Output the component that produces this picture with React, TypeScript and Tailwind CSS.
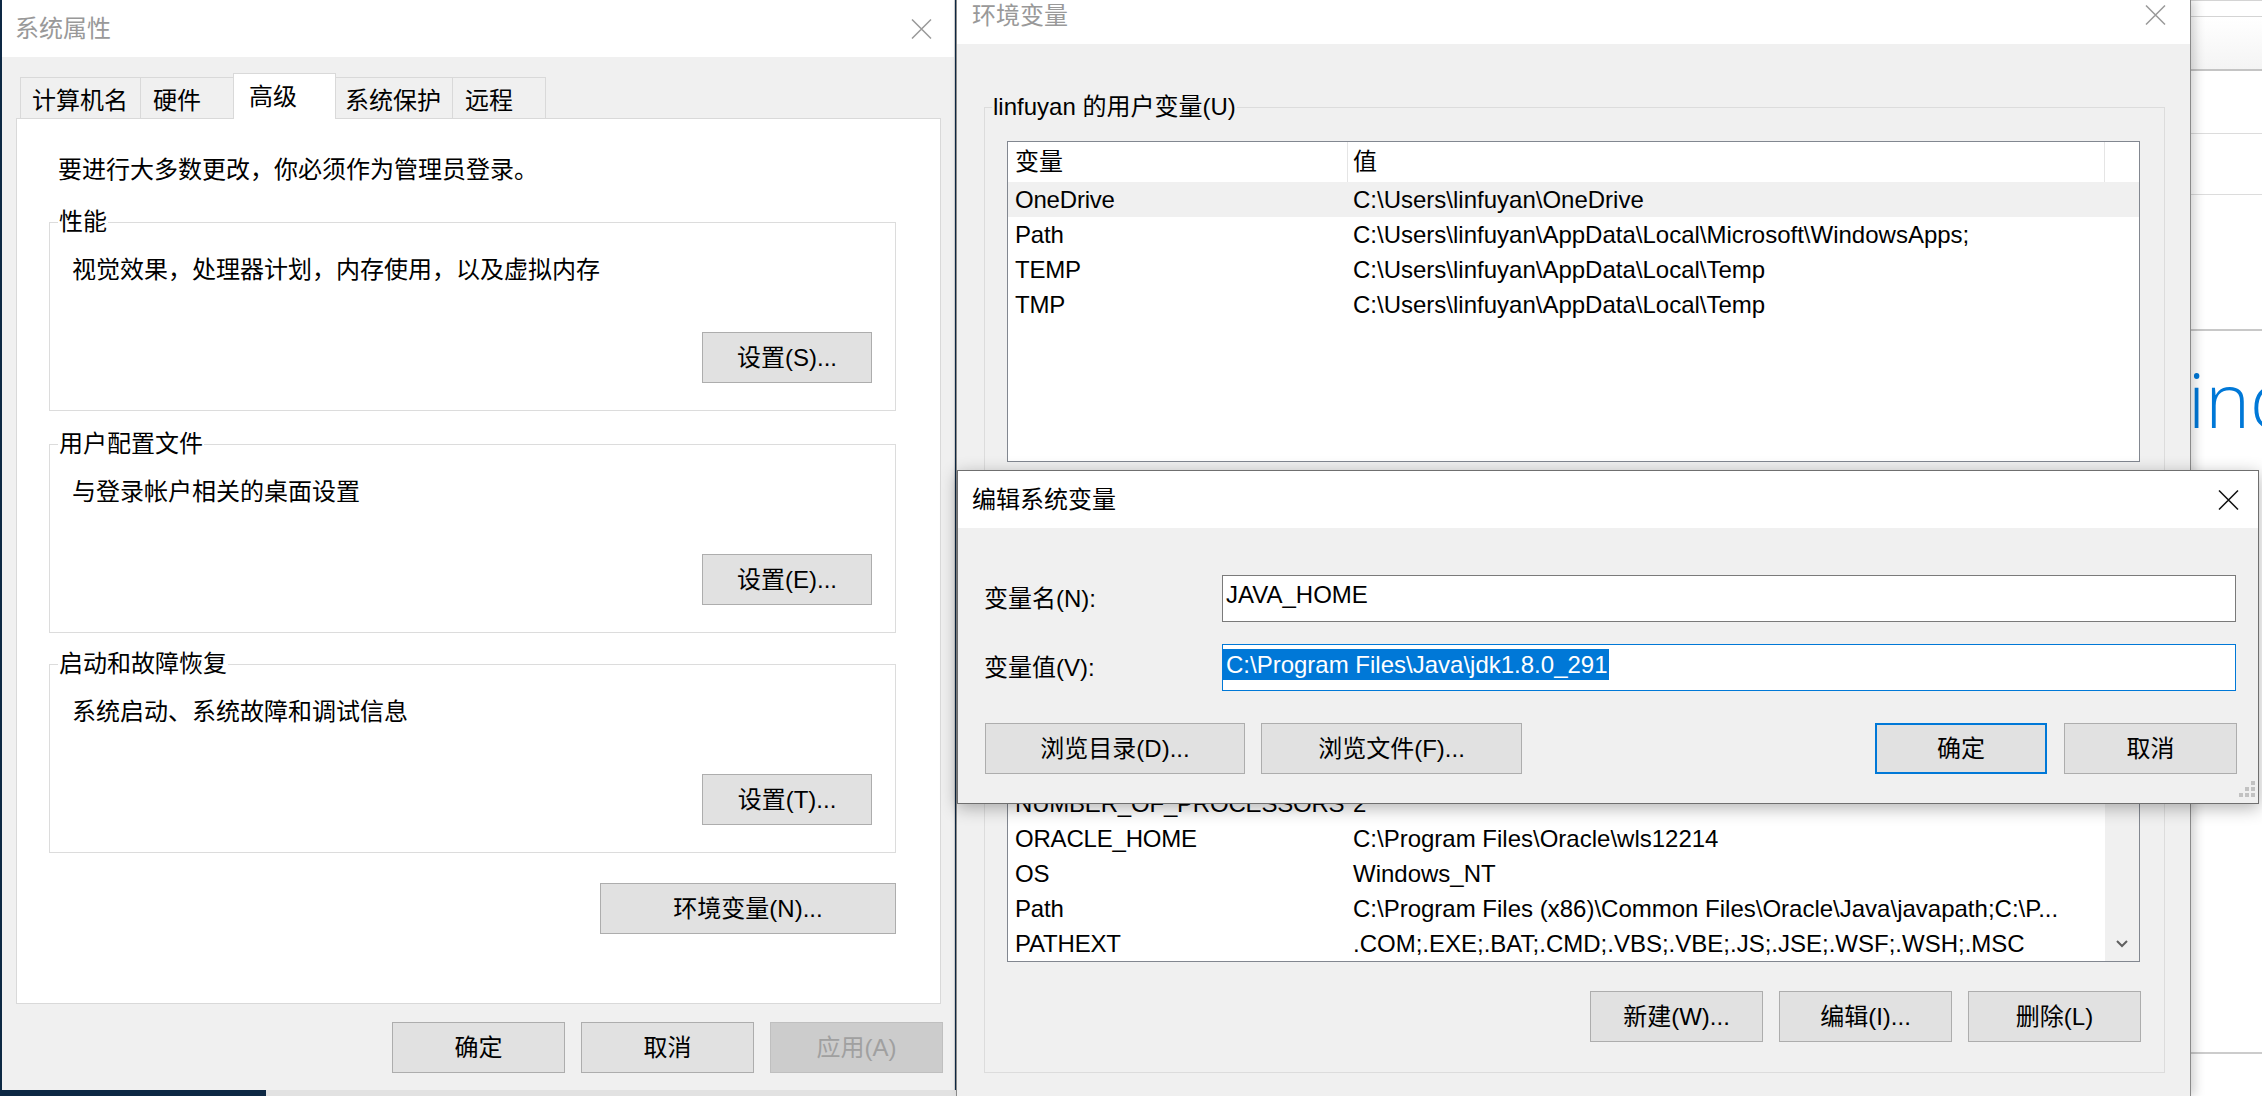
import React from 'react'

function CloseX({ color }: { color: string }) {
  return (
    <svg width="21" height="20" viewBox="0 0 21 20">
      <path d="M1 0.5 L20 19.5 M20 0.5 L1 19.5" stroke={color} strokeWidth="1.5" fill="none" />
    </svg>
  )
}

function Btn({ label, className = '', disabled = false, primary = false }: { label: string; className?: string; disabled?: boolean; primary?: boolean }) {
  const look = disabled
    ? 'bg-[#cccccc] border border-[#bfbfbf] text-[#a0a0a0]'
    : primary
      ? 'bg-[#e1e1e1] border-2 border-[#0078d7] text-black'
      : 'bg-[#e1e1e1] border border-[#adadad] text-black'
  return (
    <div className={`h-[51px] flex items-center justify-center leading-none ${look} ${className}`}>
      {label}
    </div>
  )
}

function GroupBox({ title, desc, btn, className = '' }: { title: string; desc: string; btn: string; className?: string }) {
  return (
    <fieldset className={`min-w-0 w-[847px] h-[203px] border border-[#dcdcdc] ${className}`}>
      <legend className="ml-[8px] px-[1px] leading-[28px]">{title}</legend>
      <div className="pl-[22px] pt-[19px] leading-[30px]">{desc}</div>
      <div className="flex justify-end pr-[23px] mt-[47px]">
        <Btn label={btn} className="w-[170px]" />
      </div>
    </fieldset>
  )
}

const tabs = [
  { label: '计算机名', cls: 'w-[120px] pl-[11px]' },
  { label: '硬件', cls: 'w-[93px] pl-[12px]' },
  { label: '高级', cls: 'w-[103px] pl-[15px]', active: true },
  { label: '系统保护', cls: 'w-[116px] pl-[9px] border-l-0' },
  { label: '远程', cls: 'w-[94px] pl-[12px] border-r' },
]

type Row = { name: string; value: string }

const userVars: Row[] = [
  { name: 'OneDrive', value: 'C:\\Users\\linfuyan\\OneDrive' },
  { name: 'Path', value: 'C:\\Users\\linfuyan\\AppData\\Local\\Microsoft\\WindowsApps;' },
  { name: 'TEMP', value: 'C:\\Users\\linfuyan\\AppData\\Local\\Temp' },
  { name: 'TMP', value: 'C:\\Users\\linfuyan\\AppData\\Local\\Temp' },
]

const sysVars: Row[] = [
  { name: 'ComSpec', value: 'C:\\Windows\\system32\\cmd.exe' },
  { name: 'DriverData', value: 'C:\\Windows\\System32\\Drivers\\DriverData' },
  { name: 'JAVA_HOME', value: 'C:\\Program Files\\Java\\jdk1.8.0_291' },
  { name: 'NUMBER_OF_PROCESSORS', value: '2' },
  { name: 'ORACLE_HOME', value: 'C:\\Program Files\\Oracle\\wls12214' },
  { name: 'OS', value: 'Windows_NT' },
  { name: 'Path', value: 'C:\\Program Files (x86)\\Common Files\\Oracle\\Java\\javapath;C:\\P...' },
  { name: 'PATHEXT', value: '.COM;.EXE;.BAT;.CMD;.VBS;.VBE;.JS;.JSE;.WSF;.WSH;.MSC' },
]

function VarRow({ row, selected }: { row: Row; selected?: boolean }) {
  return (
    <div className={`flex h-[35px] shrink-0 leading-[35px] whitespace-nowrap ${selected ? 'bg-[#f0f0f0]' : ''}`}>
      <div className="w-[340px] pl-[7px] overflow-hidden tracking-[-0.2px]">{row.name}</div>
      <div className="w-[757px] pl-[5px] overflow-hidden">{row.value}</div>
    </div>
  )
}

function ListHeader() {
  return (
    <div className="flex h-[40px] shrink-0 leading-[40px] bg-white">
      <div className="w-[340px] pl-[7px] border-r border-[#e5e5e5]">变量</div>
      <div className="w-[757px] pl-[5px] border-r border-[#e5e5e5]">值</div>
    </div>
  )
}

function SystemProps() {
  return (
    <div className="absolute left-[2px] top-0 w-[953px] h-[1090px] bg-[#f0f0f0] border-r border-[#d0d0d0] flex flex-col">
      <div className="h-[57px] shrink-0 bg-white flex items-center justify-between pl-[13px] pr-[22px]">
        <span className="text-[#999999] leading-[30px]">系统属性</span>
        <CloseX color="#9a9a9a" />
      </div>

      {/* tabs */}
      <div className="pt-[16px] pl-[18px] h-[61px] shrink-0 flex items-end">
        {tabs.map((t) =>
          t.active ? (
            <div key={t.label} className={`h-[46px] -mb-px relative z-10 bg-white border-l border-t border-r border-[#d9d9d9] flex items-center ${t.cls}`}>
              {t.label}
            </div>
          ) : (
            <div key={t.label} className={`h-[41px] pt-[5px] bg-[#f0f0f0] border-l border-t border-[#d9d9d9] flex items-center ${t.cls}`}>
              {t.label}
            </div>
          )
        )}
      </div>

      {/* panel */}
      <div className="ml-[14px] w-[925px] h-[886px] shrink-0 bg-white border border-[#d9d9d9] pt-[36px] pl-[32px]">
        <div className="pl-[9px] leading-[30px]">要进行大多数更改，你必须作为管理员登录。</div>
        <GroupBox className="mt-[23px]" title="性能" desc="视觉效果，处理器计划，内存使用，以及虚拟内存" btn="设置(S)..." />
        <GroupBox className="mt-[19px]" title="用户配置文件" desc="与登录帐户相关的桌面设置" btn="设置(E)..." />
        <GroupBox className="mt-[17px]" title="启动和故障恢复" desc="系统启动、系统故障和调试信息" btn="设置(T)..." />
        <div className="w-[847px] flex justify-end mt-[30px]">
          <Btn label="环境变量(N)..." className="w-[296px]" />
        </div>
      </div>

      <div className="flex justify-end gap-[16px] pr-[11px] mt-[18px]">
        <Btn label="确定" className="w-[173px]" />
        <Btn label="取消" className="w-[173px]" />
        <Btn label="应用(A)" className="w-[173px]" disabled />
      </div>
    </div>
  )
}

function EnvVars() {
  return (
    <div className="absolute left-[956px] top-0 w-[1235px] h-[1096px] bg-[#f0f0f0] border-l border-r border-[#8a8a8a] shadow-[4px_0_10px_rgba(0,0,0,0.18)] flex flex-col">
      <div className="h-[44px] shrink-0 bg-white flex items-start justify-between pl-[15px] pr-[24px]">
        <span className="text-[#999999] leading-[28px] mt-[2px]">环境变量</span>
        <div className="mt-[5px]">
          <CloseX color="#9a9a9a" />
        </div>
      </div>

      <div className="pl-[27px]">
        {/* user variables */}
        <fieldset className="min-w-0 w-[1181px] h-[399px] mt-[49px] border border-[#dcdcdc]">
          <legend className="ml-[7px] px-[1px] leading-[28px]">linfuyan 的用户变量(U)</legend>
          <div className="ml-[22px] mt-[20px] w-[1133px] h-[321px] bg-white border border-[#828790] flex flex-col">
            <ListHeader />
            {userVars.map((r, i) => (
              <VarRow key={r.name} row={r} selected={i === 0} />
            ))}
          </div>
        </fieldset>

        {/* system variables */}
        <fieldset className="min-w-0 w-[1181px] h-[567px] mt-[14px] border border-[#dcdcdc]">
          <legend className="ml-[7px] px-[1px] leading-[28px]">系统变量(S)</legend>
          <div className="ml-[22px] mt-[20px] w-[1133px] h-[408px] bg-white border border-[#828790] flex flex-col">
            <ListHeader />
            <div className="flex-1 flex min-h-0">
              <div className="w-[1097px] flex flex-col justify-end overflow-hidden">
                {sysVars.map((r) => (
                  <VarRow key={r.name} row={r} />
                ))}
              </div>
              <div className="flex-1 bg-[#f0f0f0] flex flex-col justify-end items-center pb-[13px]">
                <svg width="12" height="8" viewBox="0 0 12 8">
                  <path d="M1 1 L6 6 L11 1" stroke="#606060" strokeWidth="2" fill="none" />
                </svg>
              </div>
            </div>
          </div>
          <div className="flex justify-end gap-[16px] pr-[23px] mt-[29px]">
            <Btn label="新建(W)..." className="w-[173px]" />
            <Btn label="编辑(I)..." className="w-[173px]" />
            <Btn label="删除(L)" className="w-[173px]" />
          </div>
        </fieldset>
      </div>
    </div>
  )
}

function EditDialog() {
  return (
    <div className="absolute left-[957px] top-[470px] w-[1302px] h-[334px] bg-[#f0f0f0] border border-[#6f6f6f] shadow-[0_4px_16px_rgba(0,0,0,0.3)] flex flex-col">
      <div className="h-[57px] shrink-0 bg-white flex items-center justify-between pl-[14px] pr-[19px]">
        <span className="leading-[30px]">编辑系统变量</span>
        <CloseX color="#111111" />
      </div>
      <div className="pl-[26px] pr-[21px] pt-[47px]">
        <div className="flex items-center">
          <div className="w-[238px] leading-[30px]">变量名(N):</div>
          <div className="w-[1014px] h-[47px] bg-white border border-[#7a7a7a] pl-[3px] pt-[4px] leading-[30px]">JAVA_HOME</div>
        </div>
        <div className="flex items-center mt-[22px]">
          <div className="w-[238px] leading-[30px]">变量值(V):</div>
          <div className="w-[1014px] h-[47px] bg-white border border-[#0078d7] pt-[2px]">
            <span className="inline-block bg-[#0078d7] text-white leading-[31px] pl-[3px] pr-[1px]">C:\Program Files\Java\jdk1.8.0_291</span>
          </div>
        </div>
        <div className="flex mt-[32px] pl-px">
          <Btn label="浏览目录(D)..." className="w-[260px]" />
          <Btn label="浏览文件(F)..." className="w-[261px] ml-[16px]" />
          <div className="flex-1" />
          <Btn label="确定" className="w-[172px]" primary />
          <Btn label="取消" className="w-[173px] ml-[17px]" />
        </div>
      </div>
      <svg className="absolute right-[3px] bottom-[6px]" width="16" height="16" viewBox="0 0 16 16">
        <rect x="12" y="0" width="4" height="4" fill="#c2c2c2" />
        <rect x="6" y="6" width="4" height="4" fill="#c2c2c2" />
        <rect x="12" y="6" width="4" height="4" fill="#c2c2c2" />
        <rect x="0" y="12" width="4" height="4" fill="#c2c2c2" />
        <rect x="6" y="12" width="4" height="4" fill="#c2c2c2" />
        <rect x="12" y="12" width="4" height="4" fill="#c2c2c2" />
      </svg>
    </div>
  )
}

function BackWindow() {
  return (
    <div className="absolute left-[2190px] top-0 w-[72px] h-[1096px] bg-white flex flex-col overflow-hidden">
      <div className="h-[17px] shrink-0 border-t border-b border-[#d4d4d4]" />
      <div className="h-[54px] shrink-0 bg-gradient-to-b from-white to-[#f4f4f4] border-b-2 border-[#c4c4c4]" />
      <div className="h-[63px] shrink-0 border-b border-[#dcdcdc]" />
      <div className="h-[61px] shrink-0 border-b border-[#dcdcdc]" />
      <div className="h-[136px] shrink-0 border-b-2 border-[#c8c8c8]" />
      <div className="mt-[30px] -ml-[2px] whitespace-nowrap font-['Open_Sans',sans-serif] font-light text-[76px] leading-[76px] text-[#0078d7]">
        indows
      </div>
      <div className="h-[617px] shrink-0 border-b-2 border-[#cccccc]" />
    </div>
  )
}

export default function App() {
  return (
    <div className="relative w-[2262px] h-[1096px] overflow-hidden bg-[#0d2844] text-black text-[24px] font-['Liberation_Sans','Noto_Sans_CJK_SC',sans-serif]">
      <div className="absolute left-[266px] top-[1090px] w-[690px] h-[6px] bg-[#e2e2e2]" />
      <BackWindow />
      <SystemProps />
      <EnvVars />
      <EditDialog />
    </div>
  )
}
